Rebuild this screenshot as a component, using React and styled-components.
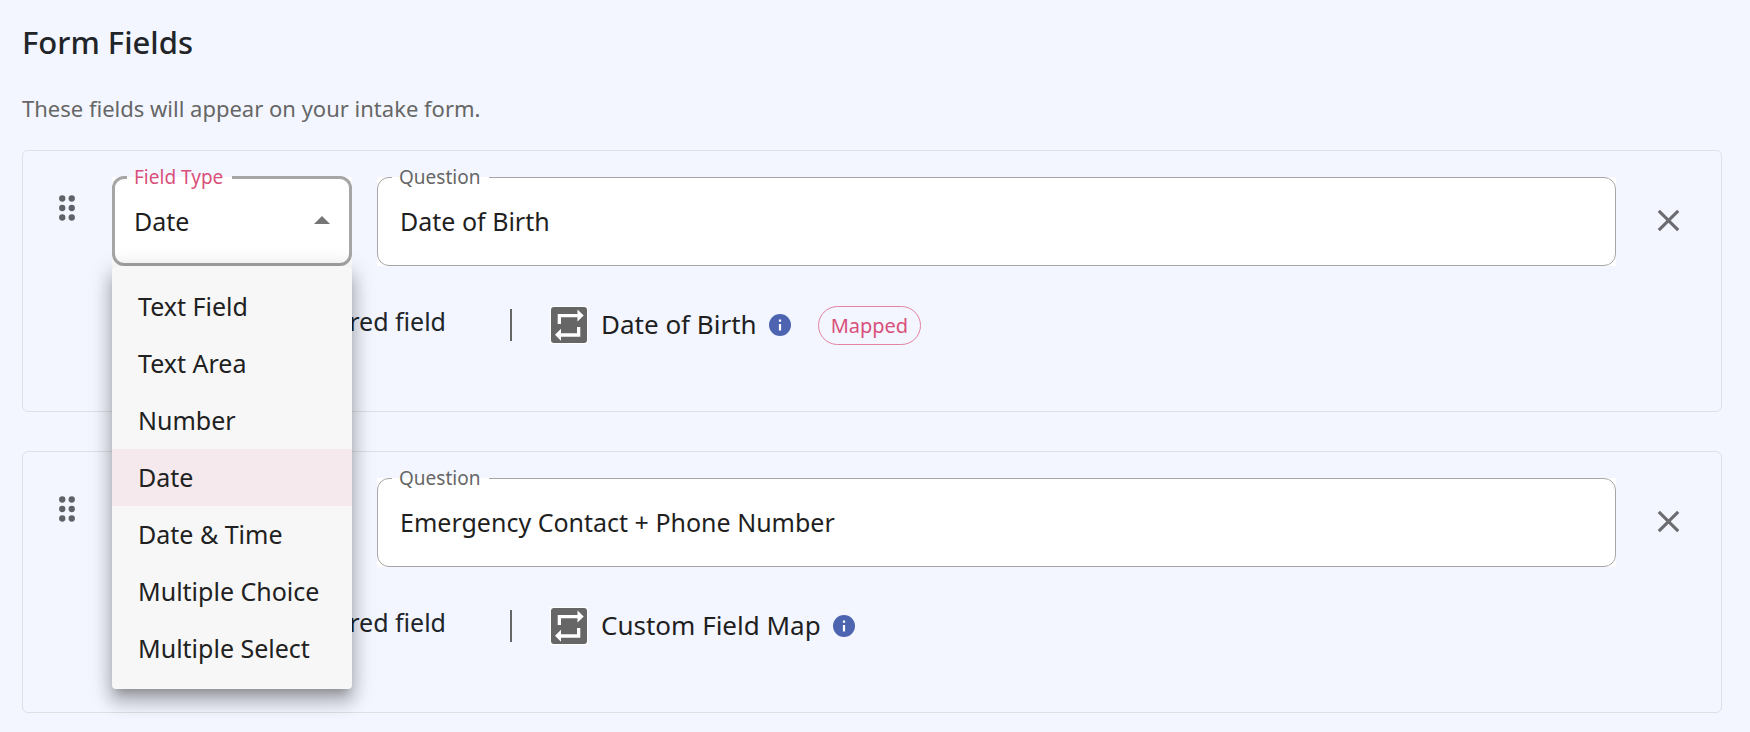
import React, { useState } from 'react'
import styled, { createGlobalStyle } from 'styled-components';

const GlobalStyle = createGlobalStyle`
    body {
        margin: 0;
        background: #f3f6ff;
        color: #212529;
        font-family: "Noto Sans", sans-serif;
        font-size: 25px;
    }
    * {
        box-sizing: border-box;
    }
`;
const Container = styled.main`
    padding: 20px 28px 20px 22px;
`;
const Title = styled.h1`
    margin: 0;
    font-size: 31px;
    font-weight: 550;
    line-height: 44px;
`;
const Description = styled.p`
    margin: 27px 0 25px;
    font-size: 22px;
    line-height: 34px;
    color: #666;
`;
const List = styled.div`
    display: flex;
    flex-direction: column;
    gap: 39px;
`;
const Card = styled.section`
    display: flex;
    align-items: flex-start;
    min-height: 262px;
    padding: 26px 34px 26px 25px;
    border: 1px solid #dee0e3;
    border-radius: 6px;
`;
const IconButton = styled.button`
    display: flex;
    flex: none;
    padding: 0;
    border: 0;
    background: none;
    color: ${props => props.$color};
    cursor: pointer;
`;
const DragHandle = styled(IconButton)`
    margin: 12px 26px 0 0;
    cursor: grab;
`;
const RemoveButton = styled(IconButton)`
    margin: 25px 0 0 34px;
`;
const Body = styled.div`
    flex: 1;
    min-width: 0;
`;
const Inputs = styled.div`
    display: flex;
    gap: 25px;
`;
const Field = styled.div`
    position: relative;
    display: flex;
    align-items: center;
    flex: ${props => (props.$width ? `0 0 ${props.$width}` : '1')};
    height: 89px;
    background: #fff;
`;
const Label = styled.label`
    position: absolute;
    top: -13px;
    left: 22px;
    z-index: 1;
    font-size: 19px;
    line-height: 26px;
    color: ${props => (props.$active ? '#d9507a' : '#666')};
`;
/* the legend only opens the gap in the border, the label is drawn over it */
const Outline = styled.fieldset`
    position: absolute;
    inset: -12px 0 0;
    min-width: 0;
    margin: 0;
    padding: 0 ${props => (props.$active ? 12 : 14)}px;
    border: ${props => (props.$active ? '3px solid #a6a6a6' : '1px solid #a6a6a6')};
    border-radius: 12px;
    pointer-events: none;
`;
const Notch = styled.legend`
    height: 25px;
    padding: 0 8px;
    font-size: 19px;
    line-height: 25px;
    visibility: hidden;
`;
const TextInput = styled.input`
    width: 100%;
    height: 87px;
    padding: 0 23px 2px;
    border: 0;
    outline: 0;
    background: none;
    color: #1f1f1f;
    font: inherit;
`;
const Select = styled.select`
    width: 100%;
    height: 87px;
    padding: 0 22px 2px;
    border: 0;
    outline: 0;
    appearance: none;
    background: none;
    color: #1f1f1f;
    font: inherit;
    cursor: pointer;
`;
const Arrow = styled.svg`
    position: absolute;
    right: 22px;
    top: 39px;
    pointer-events: none;
    transform: ${props => (props.$open ? 'none' : 'rotate(180deg)')};
`;
const Menu = styled.div`
    position: absolute;
    top: 100%;
    left: 0;
    right: 0;
    z-index: 2;
    padding: 12px 0;
    border-radius: 4px;
    background: #f7f7f7;
    box-shadow: 0 8px 8px -5px rgba(0, 0, 0, 0.2), 0 13px 16px 2px rgba(0, 0, 0, 0.18), 0 5px 22px 3px rgba(0, 0, 0, 0.16);
`;
const MenuItem = styled.button`
    display: block;
    width: 100%;
    height: 57px;
    padding: 0 26px 2px;
    border: 0;
    background: ${props => (props.$selected ? '#f5e9ed' : 'none')};
    color: #212121;
    font: inherit;
    text-align: left;
    white-space: nowrap;
    cursor: pointer;
`;
const Settings = styled.div`
    display: flex;
    align-items: center;
    height: 40px;
    margin-top: 39px;
`;
const Required = styled.label`
    display: flex;
    align-items: center;
    justify-content: flex-end;
    gap: 16px;
    width: 334px;
    padding-bottom: 8px;
`;
const Checkbox = styled.input`
    width: 24px;
    height: 24px;
    margin: 0;
    accent-color: #d9507a;
`;
const Divider = styled.span`
    width: 2px;
    height: 32px;
    margin: 0 38px 0 64px;
    background: #666;
`;
const MapName = styled.span`
    margin: 0 12px 0 13px;
    padding-bottom: 2px;
    color: #1f1f1f;
    font-size: 26px;
`;
const Chip = styled.span`
    margin-left: 27px;
    padding: 0 12px;
    border: 1px solid #e283a1;
    border-radius: 20px;
    font-size: 20px;
    line-height: 37px;
    color: #d9507a;
`;

const fieldTypes = ['Text Field', 'Text Area', 'Number', 'Date', 'Date & Time', 'Multiple Choice', 'Multiple Select'];

const fields = [
    { id: 'dob', type: 'Date', question: 'Date of Birth', map: 'Date of Birth', mapped: true, open: true },
    { id: 'emergency', type: 'Text Field', question: 'Emergency Contact + Phone Number', map: 'Custom Field Map' },
];

const DragIcon = () => (
    <svg width="38" height="38" viewBox="0 0 24 24" fill="currentColor">
        <circle cx="9" cy="6" r="2" />
        <circle cx="15" cy="6" r="2" />
        <circle cx="9" cy="12" r="2" />
        <circle cx="15" cy="12" r="2" />
        <circle cx="9" cy="18" r="2" />
        <circle cx="15" cy="18" r="2" />
    </svg>
)

const CloseIcon = () => (
    <svg width="37" height="37" viewBox="0 0 24 24" fill="currentColor">
        <path d="M19 6.41 17.59 5 12 10.59 6.41 5 5 6.41 10.59 12 5 17.59 6.41 19 12 13.41 17.59 19 19 17.59 13.41 12z" />
    </svg>
)

const MapIcon = () => (
    <svg width="38" height="38" viewBox="0 0 38 38">
        <rect width="38" height="38" fill="#fff" />
        <rect x="1" y="1" width="36" height="36" rx="3" fill="#666" />
        <path fill="#fff" d="M7.7 18V8h19.8V3.5l6.2 6-6.2 6V11.3H11V18zM30.3 21v9.7H11v4l-6-6 6-6v4.6h16V21z" />
    </svg>
)

const InfoIcon = () => (
    <svg width="22" height="22" viewBox="2 2 20 20">
        <circle cx="12" cy="12" r="10" fill="#4d65b0" />
        <path fill="#fff" d="M13 17h-2v-6h2zM13 9h-2V7h2z" />
    </svg>
)

const FieldCard = ({ field }) => {
    const [type, setType] = useState(field.type);
    const [question, setQuestion] = useState(field.question);
    const [open, setOpen] = useState(Boolean(field.open));

    const toggle = (e) => {
        e.preventDefault();
        setOpen(!open);
    }
    const choose = (name) => {
        setType(name);
        setOpen(false);
    }

    return (
        <Card>
            <DragHandle type="button" aria-label="Reorder field" $color="#5f6368">
                <DragIcon />
            </DragHandle>
            <Body>
                <Inputs>
                    <Field $width="240px">
                        <Label htmlFor={`${field.id}-type`} $active={open}>Field Type</Label>
                        <Select
                            id={`${field.id}-type`}
                            value={type}
                            onMouseDown={toggle}
                            onChange={(e) => setType(e.target.value)}
                        >
                            {fieldTypes.map(name => <option key={name}>{name}</option>)}
                        </Select>
                        <Arrow width="16" height="8" viewBox="0 0 16 8" $open={open}>
                            <path fill="#757575" d="M0 8 8 0l8 8z" />
                        </Arrow>
                        <Outline aria-hidden="true" $active={open}>
                            <Notch>Field Type</Notch>
                        </Outline>
                        {open && (
                            <Menu role="listbox" aria-label="Field Type">
                                {fieldTypes.map(name => (
                                    <MenuItem
                                        key={name}
                                        type="button"
                                        role="option"
                                        aria-selected={name === type}
                                        $selected={name === type}
                                        onClick={() => choose(name)}
                                    >
                                        {name}
                                    </MenuItem>
                                ))}
                            </Menu>
                        )}
                    </Field>
                    <Field>
                        <Label htmlFor={`${field.id}-question`}>Question</Label>
                        <TextInput
                            id={`${field.id}-question`}
                            type="text"
                            value={question}
                            onChange={(e) => setQuestion(e.target.value)}
                        />
                        <Outline aria-hidden="true">
                            <Notch>Question</Notch>
                        </Outline>
                    </Field>
                </Inputs>
                <Settings>
                    <Required>
                        <Checkbox type="checkbox" />
                        Required field
                    </Required>
                    <Divider />
                    <MapIcon />
                    <MapName>{field.map}</MapName>
                    <IconButton type="button" aria-label="About field mapping">
                        <InfoIcon />
                    </IconButton>
                    {field.mapped && <Chip>Mapped</Chip>}
                </Settings>
            </Body>
            <RemoveButton type="button" aria-label="Remove field" $color="#6b6b70">
                <CloseIcon />
            </RemoveButton>
        </Card>
    )
}

const App = () => {
    return (
        <Container>
            <GlobalStyle />
            <Title>Form Fields</Title>
            <Description>These fields will appear on your intake form.</Description>
            <List>
                {fields.map(field => <FieldCard key={field.id} field={field} />)}
            </List>
        </Container>
    )
}

export default App
